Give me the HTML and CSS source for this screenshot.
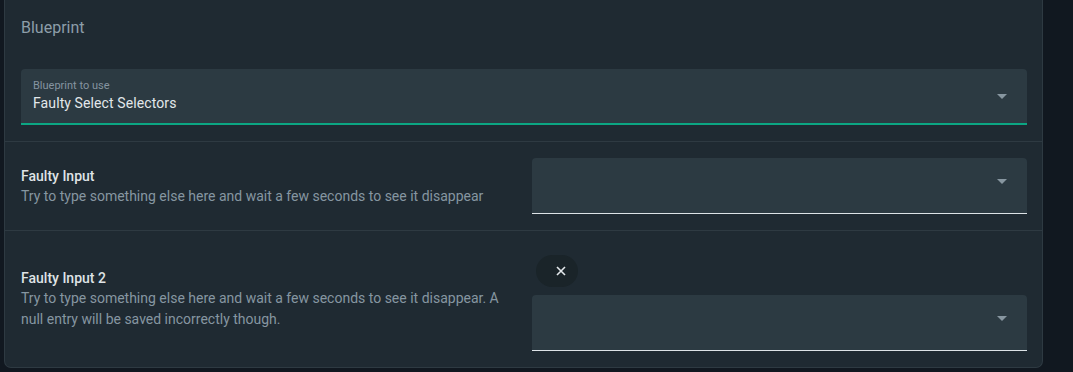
FILE: index.html
```html
<!DOCTYPE html>
<html>
<head>
<meta charset="utf-8">
<link rel="stylesheet" href="styles.css">
</head>
<body>
<div class="page">
  <div class="card">
    <div class="card-header">Blueprint</div>
    <div class="section">
      <div class="select focused">
        <div class="select-text">
          <div class="select-label">Blueprint to use</div>
          <div class="select-value">Faulty Select Selectors</div>
        </div>
        <span class="arrow"></span>
      </div>
    </div>
    <div class="row">
      <div class="row-text">
        <div class="row-title">Faulty Input</div>
        <div class="row-desc">Try to type something else here and wait a few seconds to see it disappear</div>
      </div>
      <div class="row-control">
        <div class="select">
          <div class="select-text"></div>
          <span class="arrow"></span>
        </div>
      </div>
    </div>
    <div class="row">
      <div class="row-text">
        <div class="row-title">Faulty Input 2</div>
        <div class="row-desc">Try to type something else here and wait a few seconds to see it disappear. A null entry will be saved incorrectly though.</div>
      </div>
      <div class="row-control">
        <div class="chip">
          <svg width="10" height="10" viewBox="0 0 10 10"><path d="M1 1 L9 9 M9 1 L1 9" stroke="#e4e9ec" stroke-width="1.6" fill="none"/></svg>
        </div>
        <div class="select">
          <div class="select-text"></div>
          <span class="arrow"></span>
        </div>
      </div>
    </div>
  </div>
</div>
</body>
</html>
```

FILE: styles.css
```css
* { box-sizing: border-box; }
html, body { margin: 0; padding: 0; }
body {
  background: #111820;
  font-family: Roboto, "Noto Sans", sans-serif;
  width: 1073px;
  height: 372px;
  overflow: hidden;
}
.page {
  padding: 0 30px 0 4px;
}
.card {
  background: #1f2a32;
  border: 1px solid #2e3a42;
  border-top: 0;
  border-radius: 0 0 7px 7px;
}
.card-header {
  padding: 16px 16px 0;
  font-size: 16px;
  line-height: 24px;
  color: #8d9ea9;
}
.section {
  padding: 29px 15px 16px 16px;
}
.select {
  position: relative;
  height: 56px;
  background: #2c3a42;
  border-radius: 4px 4px 0 0;
  border-bottom: 1px solid #dde3e7;
  display: flex;
  align-items: center;
}
.select.focused {
  border-bottom: 2px solid #0ca683;
  align-items: flex-start;
}
.select-text {
  flex: 1;
  padding: 10px 12px 0;
}
.select-label {
  font-size: 11px;
  line-height: 14px;
  color: #8594a0;
}
.select-value {
  font-size: 14px;
  line-height: 20px;
  letter-spacing: 0.1px;
  color: #e3e8eb;
}
.arrow {
  position: absolute;
  right: 20px;
  top: 21px;
  width: 0;
  height: 0;
  border-left: 5px solid transparent;
  border-right: 5px solid transparent;
  border-top: 5px solid #8796a0;
}
.select.focused .arrow { top: 25px; }
.row {
  border-top: 1px solid #2e3a42;
  padding: 16px 15px 16px 16px;
  display: grid;
  grid-template-columns: 1fr 1fr;
  column-gap: 16px;
  align-items: center;
}
.row-title {
  font-size: 14px;
  line-height: 20px;
  font-weight: 500;
  color: #dfe3e6;
}
.row-desc {
  font-size: 14px;
  line-height: 21px;
  color: #8696a1;
}
.row-control {
  display: flex;
  flex-direction: column;
}
.chip {
  margin: 8px 0 8px 4px;
  width: 42px;
  height: 32px;
  border-radius: 16px;
  background: #1a2429;
  display: flex;
  align-items: center;
  padding-left: 20px;
}
.chip svg { display: block; }
```
